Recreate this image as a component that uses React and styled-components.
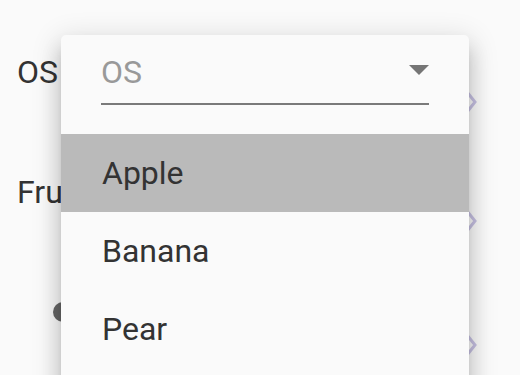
import React from "react";
import styled, { createGlobalStyle } from "styled-components";

const Global = createGlobalStyle`
  html, body {
    margin: 0;
    padding: 0;
    background: #fafafa;
    font-family: Roboto, "Liberation Sans", sans-serif;
    overflow: hidden;
  }
`;

const Page = styled.div`
  position: relative;
  width: 520px;
  height: 375px;
  overflow: hidden;
  background: #fafafa;
`;

const List = styled.div`
  display: flex;
  flex-direction: column;
  padding-top: 52px;
`;

const Row = styled.div`
  display: flex;
  align-items: flex-start;
  height: 120px;
  padding: 0 42px 0 17px;
`;

const Label = styled.span`
  font-size: 32px;
  line-height: 40px;
  color: #333;
`;

const Dot = styled.span`
  width: 20px;
  height: 20px;
  margin: 10px 0 0 36px;
  border-radius: 50%;
  background: #666;
`;

const Spacer = styled.div`
  flex: 1;
`;

const Chevron = styled.svg`
  width: 14px;
  height: 24px;
  margin-top: ${(p) => p.offset}px;
  color: #c6c0e2;
`;

const Menu = styled.div`
  position: absolute;
  left: 61px;
  top: 35px;
  width: 408px;
  height: 400px;
  border-radius: 5px;
  background: #fafafa;
  box-shadow: 0 10px 10px -6px rgba(0, 0, 0, 0.2),
    0 16px 20px 2px rgba(0, 0, 0, 0.14), 0 6px 28px 4px rgba(0, 0, 0, 0.12);
`;

const Field = styled.div`
  display: flex;
  align-items: center;
  margin: 17px 40px 0 40px;
  padding: 0 0 11px 0;
  border-bottom: 2px solid #7a7a7a;
`;

const Placeholder = styled.span`
  flex: 1;
  font-size: 32px;
  line-height: 40px;
  color: #999;
`;

const Caret = styled.span`
  width: 0;
  height: 0;
  margin-top: -4px;
  border-left: 10px solid transparent;
  border-right: 10px solid transparent;
  border-top: 10px solid #757575;
`;

const Options = styled.ul`
  list-style: none;
  margin: 29px 0 0 0;
  padding: 0;
`;

const Option = styled.li`
  display: flex;
  align-items: center;
  height: 78px;
  padding-left: 41px;
  font-size: 32px;
  line-height: 40px;
  color: #333;
  background: ${(p) => (p.selected ? "#bababa" : "transparent")};
`;

const ChevronIcon = ({ offset }) => (
  <Chevron offset={offset} viewBox="0 0 14 24">
    <path d="M3 2 L11 12 L3 22" fill="none" stroke="currentColor" strokeWidth="3" />
  </Chevron>
);

export default function App() {
  const fruits = ["Apple", "Banana", "Pear"];
  return (
    <Page>
      <Global />
      <List>
        <Row>
          <Label>OS</Label>
          <Spacer />
          <ChevronIcon offset={38} />
        </Row>
        <Row>
          <Label>Fruit</Label>
          <Spacer />
          <ChevronIcon offset={37} />
        </Row>
        <Row>
          <Dot />
          <Spacer />
          <ChevronIcon offset={41} />
        </Row>
      </List>
      <Menu>
        <Field>
          <Placeholder>OS</Placeholder>
          <Caret />
        </Field>
        <Options>
          {fruits.map((f, i) => (
            <Option key={f} selected={i === 0}>
              {f}
            </Option>
          ))}
        </Options>
      </Menu>
    </Page>
  );
}
